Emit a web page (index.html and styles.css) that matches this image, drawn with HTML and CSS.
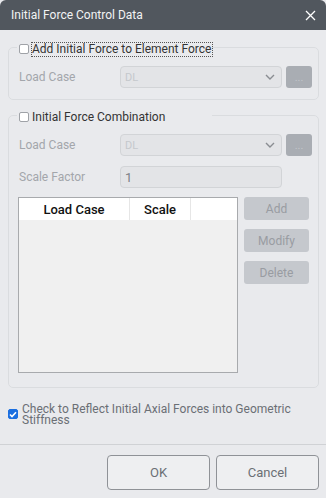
FILE: index.html
```html
<!DOCTYPE html>
<html>
<head>
<meta charset="utf-8">
<link rel="stylesheet" href="styles.css">
</head>
<body>
<div class="window">
  <div class="titlebar">
    <span class="title">Initial Force Control Data</span>
    <svg class="close" width="11" height="11" viewBox="0 0 11 11"><path d="M1 1L10 10M10 1L1 10" stroke="#fff" stroke-width="1.3" fill="none"/></svg>
  </div>
  <fieldset class="group g1">
    <legend class="legend"><span class="cb"></span><span class="focus">Add Initial Force to Element Force</span></legend>
    <div class="row">
      <span class="lbl">Load Case</span>
      <div class="select"><span>DL</span><svg width="10" height="6" viewBox="0 0 10 6"><path d="M1 1L5 5L9 1" stroke="#8a8d92" stroke-width="1.4" fill="none"/></svg></div>
      <div class="dots">...</div>
    </div>
  </fieldset>
  <fieldset class="group g2">
    <legend class="legend"><span class="cb"></span><span class="ltext">Initial Force Combination</span></legend>
    <div class="row">
      <span class="lbl">Load Case</span>
      <div class="select"><span>DL</span><svg width="10" height="6" viewBox="0 0 10 6"><path d="M1 1L5 5L9 1" stroke="#8a8d92" stroke-width="1.4" fill="none"/></svg></div>
      <div class="dots">...</div>
    </div>
    <div class="row row2">
      <span class="lbl">Scale Factor</span>
      <div class="input">1</div>
    </div>
    <div class="tablearea">
      <div class="table">
        <div class="thead"><div class="c1">Load Case</div><div class="c2">Scale</div><div class="c3"></div></div>
        <div class="tbody"></div>
      </div>
      <div class="sidebtns">
        <div class="sbtn">Add</div>
        <div class="sbtn">Modify</div>
        <div class="sbtn">Delete</div>
      </div>
    </div>
  </fieldset>
  <div class="reflect">
    <span class="cb checked"><svg width="8" height="7" viewBox="0 0 8 7"><path d="M1 3.5L3 5.5L7 1.2" stroke="#fff" stroke-width="1.6" fill="none"/></svg></span>
    <span class="rtext">Check to Reflect Initial Axial Forces into Geometric Stiffness</span>
  </div>
  <div class="spacer"></div>
  <div class="divider"></div>
  <div class="footer">
    <div class="fbtn">OK</div>
    <div class="fbtn">Cancel</div>
  </div>
</div>
</body>
</html>
```
FILE: styles.css
```css
html, body {
  margin: 0;
  padding: 0;
  background: #e9eaed;
}
body {
  font-family: Roboto, "Liberation Sans", sans-serif;
  font-size: 12px;
}
.window {
  width: 326px;
  height: 498px;
  display: flex;
  flex-direction: column;
  background: #e9eaed;
  border-radius: 6px 6px 0 0;
  overflow: hidden;
}
.titlebar {
  height: 30px;
  flex: none;
  background: #51575e;
  display: flex;
  align-items: center;
  justify-content: space-between;
  padding: 0 10px 0 11px;
}
.title {
  color: #f2f3f4;
  font-size: 12px;
}
.close {
  display: block;
}
.group {
  margin: 0 7px 0 8px;
  border: 1px solid #dadcdf;
  border-radius: 5px;
  padding: 0 6px 0 10px;
  min-width: 0;
}
.g1 {
  margin-top: 9px;
  padding-top: 10px;
  padding-bottom: 11px;
}
.g2 {
  margin-top: 7px;
  padding-top: 10px;
  padding-bottom: 14px;
}
.legend {
  padding: 3px 0 0 0;
  width: 195px;
  height: 14px;
  display: flex;
  align-items: center;
  margin-left: -2px;
  box-sizing: content-box;
  white-space: nowrap;
}
.cb {
  width: 10px;
  height: 10px;
  box-sizing: border-box;
  border: 1px solid #9fa2a7;
  background: #fff;
  border-radius: 2px;
  flex: none;
  margin-left: 2px;
  margin-right: 3px;
  display: flex;
  align-items: center;
  justify-content: center;
}
.focus {
  outline: 1px dotted #555;
  line-height: 13px;
  padding: 0 1px 0 0;
  color: #333;
  font-size: 12px;
}
.ltext {
  color: #333;
  font-size: 12px;
}
.row {
  display: flex;
  align-items: center;
  height: 22px;
}
.row2 {
  margin-top: 10px;
}
.lbl {
  width: 101px;
  flex: none;
  color: #a3a6ab;
  font-size: 12px;
}
.select {
  width: 162px;
  height: 22px;
  box-sizing: border-box;
  border: 1px solid #d2d4d7;
  border-radius: 4px;
  background: #e3e4e7;
  display: flex;
  align-items: center;
  justify-content: space-between;
  padding: 0 6px 0 4px;
  color: #c5c8cc;
  font-size: 11px;
}
.dots {
  width: 26px;
  height: 22px;
  margin-left: 4px;
  border-radius: 3px;
  background: #a9adb3;
  color: #c3c6ca;
  font-size: 11px;
  display: flex;
  align-items: center;
  justify-content: center;
}
.input {
  width: 162px;
  height: 22px;
  box-sizing: border-box;
  border: 1px solid #d2d4d7;
  border-radius: 4px;
  background: #e3e4e7;
  display: flex;
  align-items: center;
  padding: 0 4px;
  color: #7d8086;
  font-size: 13px;
}
.tablearea {
  display: flex;
  margin-top: 9px;
  margin-left: -1px;
}
.table {
  width: 220px;
  height: 176px;
  box-sizing: border-box;
  border: 1px solid #a8aaad;
  background: #f0f0f0;
  display: flex;
  flex-direction: column;
}
.thead {
  display: flex;
  height: 22px;
  background: #fff;
  flex: none;
}
.thead div {
  display: flex;
  align-items: center;
  justify-content: center;
  color: #111;
  font-size: 13px;
  font-weight: 500;
  border-right: 1px solid #e6e6e6;
}
.c1 { width: 110px; }
.c2 { width: 60px; }
.c3 { flex: 1; border-right: none !important; }
.sidebtns {
  margin-left: 6px;
  display: flex;
  flex-direction: column;
  gap: 9px;
}
.sbtn {
  width: 65px;
  height: 23px;
  border-radius: 3px;
  background: #c5c8cd;
  color: #999ca2;
  font-size: 12px;
  display: flex;
  align-items: center;
  justify-content: center;
}
.reflect {
  margin: 16px 0 0 8px;
  display: flex;
  align-items: flex-start;
}
.reflect .cb {
  margin: 5px 4px 0 0;
}
.cb.checked {
  background: #1b6fe0;
  border-color: #1b6fe0;
}
.rtext {
  color: #6b6f75;
  font-size: 12px;
  line-height: 11px;
  width: 285px;
}
.spacer {
  flex: 1;
}
.divider {
  height: 1px;
  background: #d0d2d5;
  flex: none;
}
.footer {
  height: 53px;
  flex: none;
  display: flex;
  justify-content: flex-end;
  gap: 6px;
  padding: 10px 7px 0 0;
  box-sizing: border-box;
}
.fbtn {
  width: 103px;
  height: 35px;
  box-sizing: border-box;
  border: 1px solid #8f9297;
  border-radius: 4px;
  background: #eeeff1;
  color: #6b6f75;
  font-size: 13px;
  display: flex;
  align-items: center;
  justify-content: center;
}
```
